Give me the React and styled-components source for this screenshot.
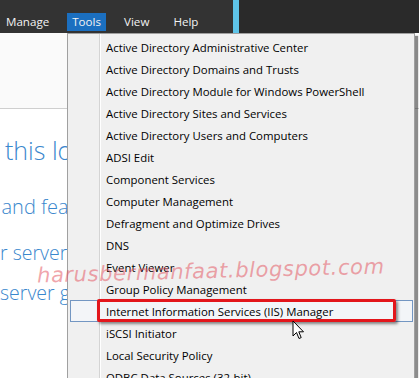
import React from 'react'
import styled, { createGlobalStyle } from 'styled-components'

const GlobalStyle = createGlobalStyle`
  * {
    box-sizing: border-box;
  }
  body {
    margin: 0;
    font-family: "Open Sans", "Noto Sans", sans-serif;
  }
`

const Screen = styled.div`
  position: relative;
  width: 419px;
  height: 378px;
  overflow: hidden;
  background: #ffffff;
`

const TopBar = styled.div`
  display: flex;
  height: 33px;
  background: #333333;
`

const MenuBar = styled.div`
  display: flex;
  align-items: flex-start;
  gap: 12px;
  width: 233px;
  padding-top: 13px;
`

const MenuTitle = styled.div`
  height: 18px;
  padding: 0 ${(p) => (p.$active ? 5 : 6)}px;
  line-height: 17px;
  font-size: 11.6px;
  color: #f2f2f2;
  background: ${(p) => (p.$active ? '#1b6fc0' : 'transparent')};
`

const Accent = styled.div`
  width: 6px;
  background: #5ec4e8;
`

const DarkFill = styled.div`
  flex: 1;
  background: #2a2a2a;
`

const Page = styled.div`
  display: flex;
  flex-direction: column;
`

const PageHeader = styled.div`
  height: 76px;
  background: #fafafa;
  border-bottom: 1px solid #cfcfcf;
`

const Links = styled.div`
  display: flex;
  flex-direction: column;
  padding-top: 24px;
`

const Link = styled.div`
  white-space: nowrap;
  color: #3a87cd;
  font-family: "Open Sans", "Noto Sans", sans-serif;
  font-weight: 300;
  font-size: ${(p) => p.$size}px;
  line-height: ${(p) => p.$height}px;
  margin-left: ${(p) => p.$indent}px;
  margin-top: ${(p) => p.$gap}px;
`

const Dropdown = styled.div`
  position: absolute;
  left: 67px;
  top: 33px;
  width: 348px;
  height: 360px;
  padding-top: 2px;
  border: 1px solid #a0a0a0;
  background:
    linear-gradient(
      to right,
      transparent 31px,
      #d4d4d4 31px,
      #d4d4d4 32px,
      #ffffff 32px,
      #ffffff 33px,
      transparent 33px
    ),
    #f0f0f0;
  box-shadow: 3px 3px 1px rgba(0, 0, 0, 0.45);
`

const Item = styled.div`
  position: relative;
  height: 22px;
  margin: 0 1px 0 2px;
  padding-left: 35px;
  line-height: 21px;
  font-size: 11.4px;
  color: #000000;
  white-space: nowrap;
  border: 1px solid ${(p) => (p.$hover ? '#7396c2' : 'transparent')};
  background: ${(p) => (p.$hover ? '#f3f5f8' : 'transparent')};
`

const Callout = styled.div`
  position: absolute;
  left: 26px;
  top: -2px;
  width: 299px;
  height: 23px;
  border: 3.5px solid #e3161c;
  border-radius: 2px;
  box-shadow: 2px 2px 3px rgba(0, 0, 0, 0.45);
`

const Watermark = styled.div`
  position: absolute;
  left: 37px;
  top: 259px;
  font-family: "DejaVu Sans", sans-serif;
  font-style: italic;
  font-weight: 200;
  font-size: 21px;
  letter-spacing: 0.6px;
  color: rgba(228, 88, 100, 0.55);
  transform: rotate(-1.5deg);
  white-space: nowrap;
  pointer-events: none;
`

const Cursor = styled.svg`
  position: absolute;
  left: 292px;
  top: 320px;
`

const tools = [
  'Active Directory Administrative Center',
  'Active Directory Domains and Trusts',
  'Active Directory Module for Windows PowerShell',
  'Active Directory Sites and Services',
  'Active Directory Users and Computers',
  'ADSI Edit',
  'Component Services',
  'Computer Management',
  'Defragment and Optimize Drives',
  'DNS',
  'Event Viewer',
  'Group Policy Management',
  'Internet Information Services (IIS) Manager',
  'iSCSI Initiator',
  'Local Security Policy',
  'ODBC Data Sources (32-bit)',
]

function App() {
  return (
    <>
      <GlobalStyle />
      <Screen>
        <TopBar>
          <MenuBar>
            <MenuTitle>Manage</MenuTitle>
            <MenuTitle $active>Tools</MenuTitle>
            <MenuTitle>View</MenuTitle>
            <MenuTitle>Help</MenuTitle>
          </MenuBar>
          <Accent />
          <DarkFill />
        </TopBar>

        <Page>
          <PageHeader />
          <Links>
            <Link $size={25} $height={34} $indent={5} $gap={0}>
              this local server
            </Link>
            <Link $size={20} $height={30} $indent={-13} $gap={25}>
              s and features
            </Link>
            <Link $size={19.5} $height={30} $indent={0} $gap={16}>
              r servers to manage
            </Link>
            <Link $size={19.5} $height={30} $indent={0} $gap={10}>
              server group
            </Link>
          </Links>
        </Page>

        <Dropdown>
          {tools.map((t) => (
            <Item key={t} $hover={t.startsWith('Internet')}>
              {t}
              {t.startsWith('Internet') && <Callout />}
            </Item>
          ))}
        </Dropdown>

        <Watermark>harusbermanfaat.blogspot.com</Watermark>

        <Cursor width="13" height="20" viewBox="0 0 13 20">
          <path
            d="M1 1 L1 16 L4.5 12.5 L7 18.5 L9.2 17.6 L6.8 11.8 L11.5 11.8 Z"
            fill="#ffffff"
            stroke="#000000"
            strokeWidth="1"
            strokeLinejoin="round"
          />
        </Cursor>
      </Screen>
    </>
  )
}

export default App
